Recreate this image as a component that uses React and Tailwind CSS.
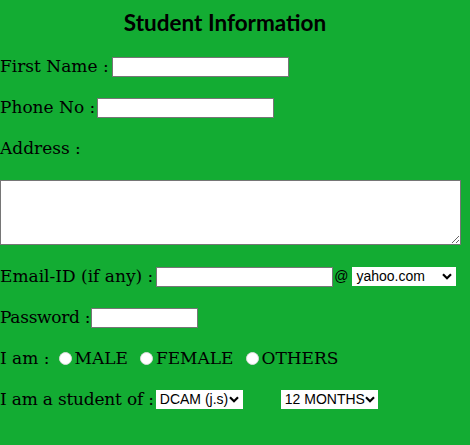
import React from 'react';

const Chevron = () => (
  <svg width="10" height="7" viewBox="0 0 10 7" className="pointer-events-none shrink-0">
    <path d="M1 1.2 L5 5.2 L9 1.2" fill="none" stroke="#000" strokeWidth="2.2" />
  </svg>
);

// fake select box drawn like a native one
const Select = ({ value, width }) => (
  <div
    className={`flex items-center justify-between bg-white h-[19px] pl-[4px] pr-[4px] whitespace-nowrap font-['Liberation_Sans',Arial,sans-serif] text-[14px] text-black ${width}`}
  >
    <span>{value}</span>
    <Chevron />
  </div>
);

const TextBox = ({ width }) => (
  <input
    type="text"
    className={`h-[20px] bg-white border border-[#767676] outline-none ${width}`}
  />
);

const Radio = ({ label }) => (
  <label className="flex items-center">
    <span className="w-[13px] h-[13px] rounded-full bg-white border border-[#dcdcdc] mr-[3px]"></span>
    <span>{label}</span>
  </label>
);

export default function App() {
  return (
    <div className="w-[470px] h-[445px] bg-[#13ac33] text-black font-['DejaVu_Serif',serif] text-[17px] overflow-hidden">
      <div className="w-[450px] h-[46px] flex items-center justify-center font-['Lato',sans-serif] font-bold text-[22.5px]">
        Student Information
      </div>

      <div className="h-[41px] flex items-center">
        <span className="mr-[3px]">First Name :</span>
        <TextBox width="w-[177px]" />
      </div>

      <div className="h-[41px] flex items-center">
        <span className="mr-[2px]">Phone No :</span>
        <TextBox width="w-[177px]" />
      </div>

      <div className="h-[41px] flex items-center">
        <span>Address :</span>
      </div>

      <textarea className="block mt-[11px] w-[461px] h-[65px] bg-white border border-[#767676] outline-none"></textarea>

      <div className="mt-[11px] h-[41px] flex items-center">
        <span className="mr-[3px]">Email-ID (if any) :</span>
        <TextBox width="w-[177px]" />
        <span className="ml-[1px] mr-[4px] text-[14px] font-['Liberation_Sans',sans-serif]">@</span>
        <Select value="yahoo.com" width="w-[104px]" />
      </div>

      <div className="h-[41px] flex items-center">
        <span className="mr-[1px] tracking-[-0.3px]">Password :</span>
        <TextBox width="w-[107px]" />
      </div>

      <div className="h-[41px] flex items-center gap-[12px]">
        <span className="mr-[-3px]">I am :</span>
        <Radio label="MALE" />
        <Radio label="FEMALE" />
        <Radio label="OTHERS" />
      </div>

      <div className="h-[41px] flex items-center">
        <span className="mr-[2px] tracking-[-0.2px]">I am a student of :</span>
        <Select value="DCAM (j.s)" width="w-[87px]" />
        <div className="w-[38px] shrink-0"></div>
        <Select value="12 MONTHS" width="w-[97px]" />
      </div>
    </div>
  );
}
